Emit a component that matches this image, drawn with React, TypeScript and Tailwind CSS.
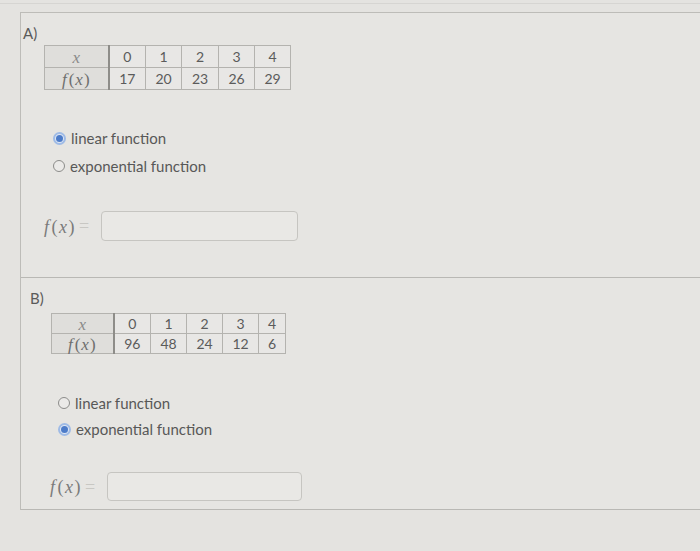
import React from "react";

const sans = { fontFamily: "Lato, 'Open Sans', sans-serif" };
const serif = { fontFamily: "'Liberation Serif', 'DejaVu Serif', serif" };

function Fx() {
  return (
    <span style={serif}>
      <span className="italic">f</span>
      <span className="ml-[1px]">(</span>
      <span className="italic">x</span>
      <span>)</span>
    </span>
  );
}

type TableProps = {
  xs: number[];
  ys: number[];
  widths: number[];
  headW: number;
  rowH: number;
};

function ValueTable({ xs, ys, widths, headW, rowH }: TableProps) {
  const cell = "border border-[#b4b3af] bg-[#e8e7e5] p-0 text-center leading-none";
  const head =
    "border border-[#b4b3af] border-r-2 border-r-[#8e8d89] bg-[#dfdedb] p-0 text-center leading-none";
  return (
    <table className="border-collapse text-[14px] text-[#5b5b5b]" style={sans}>
      <tbody>
        <tr>
          <td className={`${head} text-[17px] text-[#8a8a8a]`} style={{ width: headW, height: rowH }}>
            <span className="italic" style={serif}>
              x
            </span>
          </td>
          {xs.map((x, i) => (
            <td key={i} className={cell} style={{ width: widths[i], height: rowH }}>
              {x}
            </td>
          ))}
        </tr>
        <tr>
          <td className={`${head} text-[17px] tracking-[1px] text-[#6e6e6e]`} style={{ height: rowH }}>
            <Fx />
          </td>
          {ys.map((y, i) => (
            <td key={i} className={cell} style={{ height: rowH }}>
              {y}
            </td>
          ))}
        </tr>
      </tbody>
    </table>
  );
}

function Radio({ checked, label }: { checked: boolean; label: string }) {
  return (
    <div className="flex items-center gap-[5px]">
      {checked ? (
        <span className="flex h-[13px] w-[13px] items-center justify-center rounded-full border-2 border-[#9fbbe6] bg-[#dfe7f3]">
          <span className="h-[7px] w-[7px] rounded-full bg-[#4d7cc9]" />
        </span>
      ) : (
        <span className="h-[12px] w-[12px] rounded-full border border-[#8c8c8a] bg-[#ebeae8]" />
      )}
      <span className="text-[15px] leading-[18px] text-[#585858]" style={sans}>
        {label}
      </span>
    </div>
  );
}

function Answer() {
  return (
    <div className="flex w-[52px] items-center leading-none">
      <span className="text-[18px] tracking-[1.5px] text-[#7a7a7a]">
        <Fx />
      </span>
      <span className="ml-[3px] text-[18px] text-[#c8c7c3]" style={serif}>
        =
      </span>
    </div>
  );
}

export default function App() {
  return (
    <div className="h-[551px] w-[700px] overflow-hidden bg-[#e4e3e0]" style={sans}>
      <div className="h-[4px] border-b border-[#d6d5d2]" />
      <div className="ml-[20px] mt-[8px] border-l border-t border-[#bdbcb8] bg-[#e6e5e2]">
        {/* Part A */}
        <section className="h-[265px] border-b border-[#b9b8b4]">
          <div className="pl-[2px] pt-[12px] text-[15px] leading-[16px] text-[#5a5a5a]">A)</div>
          <div className="ml-[23px] mt-[4px]">
            <ValueTable
              xs={[0, 1, 2, 3, 4]}
              ys={[17, 20, 23, 26, 29]}
              widths={[37, 36, 37, 36, 36]}
              headW={64}
              rowH={22}
            />
          </div>
          <div className="ml-[32px] mt-[34px] flex flex-col">
            <div className="flex h-[28px] items-center">
              <Radio checked label="linear function" />
            </div>
            <div className="flex h-[28px] items-center">
              <Radio checked={false} label="exponential function" />
            </div>
          </div>
          <div className="ml-[23px] mt-[31px] flex items-center gap-[5px]">
            <Answer />
            <div className="h-[30px] w-[197px] rounded-[4px] border border-[#c6c5c1] bg-[#e9e8e5]" />
          </div>
        </section>

        {/* Part B */}
        <section className="h-[232px] border-b border-[#b9b8b4]">
          <div className="pl-[9px] pt-[12px] text-[15px] leading-[16px] text-[#5a5a5a]">B)</div>
          <div className="ml-[30px] mt-[7px]">
            <ValueTable
              xs={[0, 1, 2, 3, 4]}
              ys={[96, 48, 24, 12, 6]}
              widths={[37, 36, 36, 36, 27]}
              headW={62}
              rowH={20}
            />
          </div>
          <div className="ml-[37px] mt-[36px] flex flex-col">
            <div className="flex h-[26px] items-center">
              <Radio checked={false} label="linear function" />
            </div>
            <div className="flex h-[26px] items-center">
              <Radio checked label="exponential function" />
            </div>
          </div>
          <div className="ml-[29px] mt-[30px] flex items-center gap-[5px]">
            <Answer />
            <div className="h-[29px] w-[195px] rounded-[4px] border border-[#c6c5c1] bg-[#e9e8e5]" />
          </div>
        </section>
      </div>
    </div>
  );
}
